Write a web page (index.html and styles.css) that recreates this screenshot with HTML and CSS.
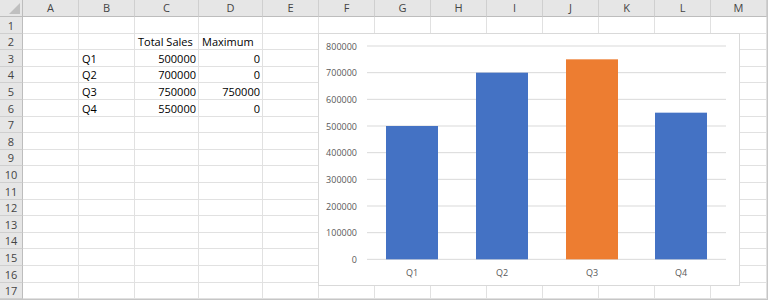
FILE: index.html
```html
<!DOCTYPE html>
<html lang="en">
<head>
    <meta charset="UTF-8">
    <title>Sales by Quarter</title>
    <link rel="stylesheet" href="styles.css">
</head>
<body>
    <div class="sheet">
        <div class="grid">
            <!-- column headings -->
            <div class="corner"></div>
            <div class="hd">A</div><div class="hd">B</div><div class="hd">C</div><div class="hd">D</div>
            <div class="hd">E</div><div class="hd">F</div><div class="hd">G</div><div class="hd">H</div>
            <div class="hd">I</div><div class="hd">J</div><div class="hd">K</div><div class="hd">L</div><div class="hd">M</div>

            <div class="rh">1</div>
            <div class="c"></div><div class="c"></div><div class="c"></div><div class="c"></div><div class="c"></div><div class="c"></div><div class="c"></div><div class="c"></div><div class="c"></div><div class="c"></div><div class="c"></div><div class="c"></div><div class="c"></div>

            <div class="rh">2</div>
            <div class="c"></div><div class="c"></div><div class="c">Total Sales</div><div class="c">Maximum</div><div class="c"></div><div class="c"></div><div class="c"></div><div class="c"></div><div class="c"></div><div class="c"></div><div class="c"></div><div class="c"></div><div class="c"></div>

            <div class="rh">3</div>
            <div class="c"></div><div class="c">Q1</div><div class="c n">500000</div><div class="c n">0</div><div class="c"></div><div class="c"></div><div class="c"></div><div class="c"></div><div class="c"></div><div class="c"></div><div class="c"></div><div class="c"></div><div class="c"></div>

            <div class="rh">4</div>
            <div class="c"></div><div class="c">Q2</div><div class="c n">700000</div><div class="c n">0</div><div class="c"></div><div class="c"></div><div class="c"></div><div class="c"></div><div class="c"></div><div class="c"></div><div class="c"></div><div class="c"></div><div class="c"></div>

            <div class="rh">5</div>
            <div class="c"></div><div class="c">Q3</div><div class="c n">750000</div><div class="c n">750000</div><div class="c"></div><div class="c"></div><div class="c"></div><div class="c"></div><div class="c"></div><div class="c"></div><div class="c"></div><div class="c"></div><div class="c"></div>

            <div class="rh">6</div>
            <div class="c"></div><div class="c">Q4</div><div class="c n">550000</div><div class="c n">0</div><div class="c"></div><div class="c"></div><div class="c"></div><div class="c"></div><div class="c"></div><div class="c"></div><div class="c"></div><div class="c"></div><div class="c"></div>

            <div class="rh">7</div>
            <div class="c"></div><div class="c"></div><div class="c"></div><div class="c"></div><div class="c"></div><div class="c"></div><div class="c"></div><div class="c"></div><div class="c"></div><div class="c"></div><div class="c"></div><div class="c"></div><div class="c"></div>

            <div class="rh">8</div>
            <div class="c"></div><div class="c"></div><div class="c"></div><div class="c"></div><div class="c"></div><div class="c"></div><div class="c"></div><div class="c"></div><div class="c"></div><div class="c"></div><div class="c"></div><div class="c"></div><div class="c"></div>

            <div class="rh">9</div>
            <div class="c"></div><div class="c"></div><div class="c"></div><div class="c"></div><div class="c"></div><div class="c"></div><div class="c"></div><div class="c"></div><div class="c"></div><div class="c"></div><div class="c"></div><div class="c"></div><div class="c"></div>

            <div class="rh">10</div>
            <div class="c"></div><div class="c"></div><div class="c"></div><div class="c"></div><div class="c"></div><div class="c"></div><div class="c"></div><div class="c"></div><div class="c"></div><div class="c"></div><div class="c"></div><div class="c"></div><div class="c"></div>

            <div class="rh">11</div>
            <div class="c"></div><div class="c"></div><div class="c"></div><div class="c"></div><div class="c"></div><div class="c"></div><div class="c"></div><div class="c"></div><div class="c"></div><div class="c"></div><div class="c"></div><div class="c"></div><div class="c"></div>

            <div class="rh">12</div>
            <div class="c"></div><div class="c"></div><div class="c"></div><div class="c"></div><div class="c"></div><div class="c"></div><div class="c"></div><div class="c"></div><div class="c"></div><div class="c"></div><div class="c"></div><div class="c"></div><div class="c"></div>

            <div class="rh">13</div>
            <div class="c"></div><div class="c"></div><div class="c"></div><div class="c"></div><div class="c"></div><div class="c"></div><div class="c"></div><div class="c"></div><div class="c"></div><div class="c"></div><div class="c"></div><div class="c"></div><div class="c"></div>

            <div class="rh">14</div>
            <div class="c"></div><div class="c"></div><div class="c"></div><div class="c"></div><div class="c"></div><div class="c"></div><div class="c"></div><div class="c"></div><div class="c"></div><div class="c"></div><div class="c"></div><div class="c"></div><div class="c"></div>

            <div class="rh">15</div>
            <div class="c"></div><div class="c"></div><div class="c"></div><div class="c"></div><div class="c"></div><div class="c"></div><div class="c"></div><div class="c"></div><div class="c"></div><div class="c"></div><div class="c"></div><div class="c"></div><div class="c"></div>

            <div class="rh">16</div>
            <div class="c"></div><div class="c"></div><div class="c"></div><div class="c"></div><div class="c"></div><div class="c"></div><div class="c"></div><div class="c"></div><div class="c"></div><div class="c"></div><div class="c"></div><div class="c"></div><div class="c"></div>

            <div class="rh">17</div>
            <div class="c"></div><div class="c"></div><div class="c"></div><div class="c"></div><div class="c"></div><div class="c"></div><div class="c"></div><div class="c"></div><div class="c"></div><div class="c"></div><div class="c"></div><div class="c"></div><div class="c"></div>
        </div>

        <!-- embedded column chart, floats over the cells -->
        <div class="chart">
            <svg width="420" height="251" viewBox="0 0 420 251">
                <g class="gridlines">
                    <line x1="48" y1="12" x2="407" y2="12"/>
                    <line x1="48" y1="38.67" x2="407" y2="38.67"/>
                    <line x1="48" y1="65.33" x2="407" y2="65.33"/>
                    <line x1="48" y1="92" x2="407" y2="92"/>
                    <line x1="48" y1="118.67" x2="407" y2="118.67"/>
                    <line x1="48" y1="145.33" x2="407" y2="145.33"/>
                    <line x1="48" y1="172" x2="407" y2="172"/>
                    <line x1="48" y1="198.67" x2="407" y2="198.67"/>
                    <line x1="48" y1="225.33" x2="407" y2="225.33"/>
                </g>
                <g class="ylabels">
                    <text x="38" y="15.5">800000</text>
                    <text x="38" y="42.2">700000</text>
                    <text x="38" y="68.8">600000</text>
                    <text x="38" y="95.5">500000</text>
                    <text x="38" y="122.2">400000</text>
                    <text x="38" y="148.8">300000</text>
                    <text x="38" y="175.5">200000</text>
                    <text x="38" y="202.2">100000</text>
                    <text x="38" y="228.8">0</text>
                </g>
                <rect class="bar" x="67" y="92" width="52" height="133.33"/>
                <rect class="bar" x="157" y="38.67" width="52" height="186.67"/>
                <rect class="bar max" x="247" y="25.33" width="52" height="200"/>
                <rect class="bar" x="336" y="78.67" width="52" height="146.67"/>
                <g class="xlabels">
                    <text x="93" y="241.5">Q1</text>
                    <text x="183" y="241.5">Q2</text>
                    <text x="273" y="241.5">Q3</text>
                    <text x="362" y="241.5">Q4</text>
                </g>
            </svg>
        </div>
    </div>
</body>
</html>
```

FILE: styles.css
```css
body {
    margin: 0;
    background: #fff;
    font-family: "Open Sans", Lato, sans-serif;
}

.sheet {
    position: relative;
    width: 768px;
}

.grid {
    display: grid;
    grid-template-columns: 23px 56px 56px 64px 64px repeat(9, 56px);
    grid-template-rows: 17px repeat(17, 16.6px);
    border-right: 1px solid #c6c6c6;
    border-bottom: 1px solid #c6c6c6;
    width: 767px;
}

.corner,
.hd,
.rh {
    background: #e6e6e6;
    color: #444;
    font-size: 11px;
    line-height: 14px;
    box-sizing: border-box;
    display: flex;
    justify-content: center;
    align-items: flex-end;
}

.corner {
    position: relative;
    border-right: 1px solid #bdbdbd;
    border-bottom: 1px solid #bdbdbd;
}

/* little triangle in the select-all box */
.corner::after {
    content: "";
    position: absolute;
    right: 2px;
    bottom: 2px;
    border-left: 11px solid transparent;
    border-bottom: 11px solid #bfbfbf;
}

.hd {
    border-right: 1px solid #cfcfcf;
    border-bottom: 1px solid #bdbdbd;
    padding-bottom: 1px;
}

.rh {
    border-right: 1px solid #bdbdbd;
    border-bottom: 1px solid #cfcfcf;
    padding-bottom: 0;
}

.c {
    box-sizing: border-box;
    border-right: 1px solid #e1e1e1;
    border-bottom: 1px solid #e1e1e1;
    font-size: 11px;
    line-height: 14px;
    color: #000;
    display: flex;
    align-items: flex-end;
    padding: 0 2px 0 3px;
    white-space: nowrap;
    overflow: visible;
}

.c.n {
    justify-content: flex-end;
}

.chart {
    position: absolute;
    left: 318px;
    top: 33px;
    width: 422px;
    height: 253px;
    box-sizing: border-box;
    border: 1px solid #d9d9d9;
    background: #fff;
}

.chart svg {
    display: block;
}

.gridlines line {
    stroke: #d9d9d9;
    stroke-width: 1;
}

.ylabels text,
.xlabels text {
    font-family: "Open Sans", Lato, sans-serif;
    font-size: 9px;
    fill: #595959;
}

.ylabels text {
    text-anchor: end;
}

.xlabels text {
    text-anchor: middle;
}

.bar {
    fill: #4472c4;
}

.bar.max {
    fill: #ed7d31;
}
```
